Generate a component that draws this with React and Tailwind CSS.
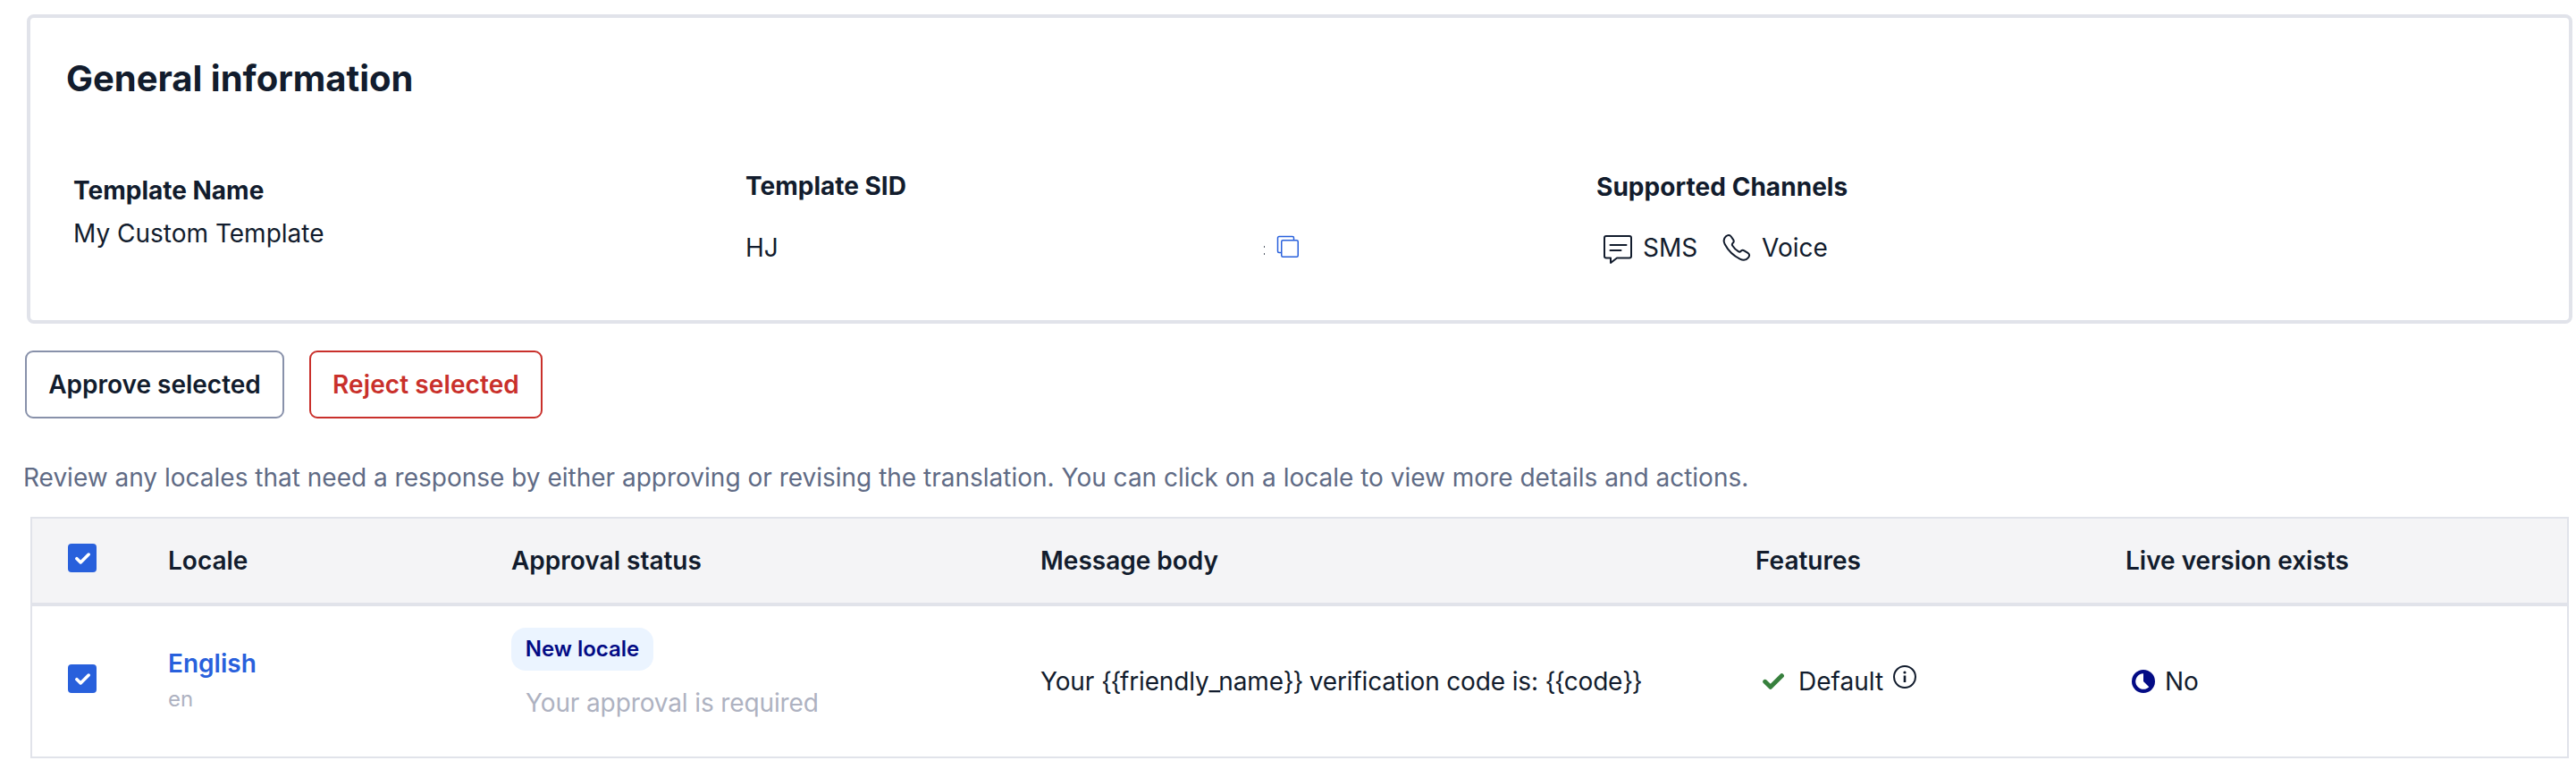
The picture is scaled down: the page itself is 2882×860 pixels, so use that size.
import React from "react";

function CopyIcon() {
  return (
    <svg className="block size-[26px]" viewBox="0 0 26 26" fill="none" stroke="#2860dc" strokeWidth="1.500">
      <path d="M5.500 19.500H3A1.500 1.500 0 0 1 1.500 18V3A1.500 1.500 0 0 1 3 1.500h15A1.500 1.500 0 0 1 19.500 3v2.500" />
      <rect x="5.750" y="5.750" width="18.500" height="18.500" rx="1.500" />
    </svg>
  );
}

function SmsIcon() {
  return (
    <svg className="block h-[34px] w-[34px]" viewBox="0 0 34 34" fill="none" stroke="#121c2d" strokeWidth="2" strokeLinecap="round" strokeLinejoin="round">
      <path d="M4 2h26a2 2 0 0 1 2 2v20.500a2 2 0 0 1-2 2H16L9 32v-5.500H4a2 2 0 0 1-2-2V4a2 2 0 0 1 2-2z" />
      <path d="M8.500 12h18M8.500 18h12" />
    </svg>
  );
}

function PhoneIcon() {
  return (
    <svg className="block size-[32px]" viewBox="0 0 32 32" fill="none" stroke="#121c2d" strokeWidth="2" strokeLinejoin="round">
      <path d="M4 3.300C6.300 1.300 8.300 1.600 9.700 3.500l2.500 3.600c1 1.500.6 2.700-.5 3.700-1 .9-1.100 1.900-.4 2.900 1.700 2.700 3.900 4.800 6.500 6.500 1.100.7 2 .6 2.900-.4 1.100-1.100 2.300-1.400 3.700-.5l4.100 2.600c1.900 1.300 2.200 3.100.5 5.200-2.300 2.900-5.800 3.300-9.400 1.500C12.600 25.200 6.300 18.900 2.800 12.300 1 8.900 1.300 5.700 4 3.300z" />
    </svg>
  );
}

function CheckIcon({ className }) {
  return (
    <svg className={className} viewBox="0 0 24 18" fill="none" stroke="currentColor" strokeWidth="5" strokeLinecap="round" strokeLinejoin="round">
      <path d="M2.700 9.300l6.100 6L21.400 2.700" />
    </svg>
  );
}

function InfoIcon() {
  return (
    <svg className="block size-[26px]" viewBox="0 0 26 26" fill="none" stroke="#121c2d" strokeWidth="2">
      <circle cx="13" cy="13" r="12" />
      <path d="M13 11.500v7.500" strokeWidth="2.600" />
      <circle cx="13" cy="8" r="1.600" fill="#121c2d" stroke="none" />
    </svg>
  );
}

function ProgressIcon() {
  return (
    <svg className="block size-[26px]" viewBox="0 0 26 26">
      <circle cx="13" cy="13" r="13" fill="#030b85" />
      <path d="M13 4.200a8.800 8.800 0 1 0 6.300 15L13 13z" fill="#fff" />
    </svg>
  );
}

function Checkbox() {
  return (
    <span className="flex size-8 items-center justify-center rounded-[4px] bg-[#2860dc]">
      <CheckIcon className="block h-[13px] w-[17px] text-white" />
    </span>
  );
}

function Variable({ children }) {
  return (
    <span>
      <span className="tracking-[-1.400px]">{"{{"}</span>
      {children}
      <span className="tracking-[-1.400px]">{"}}"}</span>
    </span>
  );
}

const grid = "grid grid-cols-[152px_384px_592px_800px_414px_1fr]";

export default function App() {
  return (
    <main className="h-[860px] w-[2882px] overflow-hidden bg-white pt-4 font-['Inter',sans-serif] text-[28px] leading-10 text-[#121c2d]">
      <section className="ml-[30px] h-[346px] w-[2848px] rounded-[8px] border-4 border-[#e1e3ea] pl-10 pt-[38px]">
        <h2 className="text-[40px] leading-[60px] font-bold">General information</h2>
        <div className="flex">
          <div className="ml-2 w-[752px] pt-[75px]">
            <h3 className="font-bold">Template Name</h3>
            <p className="mt-2">My Custom Template</p>
          </div>
          <div className="w-[952px] pt-[70px]">
            <h3 className="font-bold">Template SID</h3>
            <div className="mt-[29px] flex">
              <span className="w-[580px]">HJ</span>
              <span className="flex w-[14px] flex-col gap-[6px] pt-[18px]">
                <i className="block h-[2px] w-px bg-[#555c69]" />
                <i className="block h-[2px] w-px bg-[#555c69]" />
              </span>
              <span className="pt-[6px]"><CopyIcon /></span>
            </div>
          </div>
          <div className="pt-[71px]">
            <h3 className="font-bold tracking-[0.050px]">Supported Channels</h3>
            <div className="mt-7 flex">
              <span className="ml-[7px] w-[45px] pt-[5px]"><SmsIcon /></span>
              <span className="w-[89px]">SMS</span>
              <span className="w-[44px] pt-1"><PhoneIcon /></span>
              <span>Voice</span>
            </div>
          </div>
        </div>
      </section>

      <div className="mt-[30px] ml-7 flex gap-7">
        <button className="h-[76px] w-[290px] rounded-[9px] border-2 border-[#8891aa] font-semibold">Approve selected</button>
        <button className="h-[76px] w-[261px] rounded-[9px] border-2 border-[#c9302b] font-semibold tracking-[0.100px] text-[#c9302b]">Reject selected</button>
      </div>

      <p className="mt-[46px] ml-[26px] text-[#606b85]">
        Review any locales that need a response by either approving or revising the translation. You can click on a locale to view more details and actions.
      </p>

      <div className="mt-6 ml-[34px] h-[270px] w-[2840px] border-2 border-[#e1e3ea]">
        <div className={grid + " h-[98px] border-b-4 border-[#e1e3ea] bg-[#f4f4f6] font-semibold"}>
          <div className="pt-7 pl-10"><Checkbox /></div>
          <div className="pt-[27px]">Locale</div>
          <div className="pt-[27px]">Approval status</div>
          <div className="pt-[27px]">Message body</div>
          <div className="pt-[27px]">Features</div>
          <div className="pt-[27px]">Live version exists</div>
        </div>
        <div className={grid}>
          <div className="pt-[65px] pl-10"><Checkbox /></div>
          <div className="pt-[44px]">
            <a className="block font-semibold text-[#2860dc]">English</a>
            <span className="block text-[24px] leading-10 text-[#aeb2c1]">en</span>
          </div>
          <div className="pt-6">
            <span className="flex h-12 w-[159px] items-center justify-center rounded-[16px] bg-[#ebf4ff] text-[24px] font-semibold text-[#030b85]">New locale</span>
            <p className="mt-4 ml-4 tracking-[-0.120px] text-[#aeb2c1]">Your approval is required</p>
          </div>
          <div className="pt-16 tracking-[-0.150px]">
            Your <Variable>friendly<span className="tracking-[-2px]">_</span>name</Variable> verification code is: <Variable>code</Variable>
          </div>
          <div className="flex">
            <CheckIcon className="mt-[75px] ml-2 block h-[18px] w-6 text-[#37803d]" />
            <span className="ml-[16px] w-[106px] pt-16">Default</span>
            <span className="pt-[66px]"><InfoIcon /></span>
          </div>
          <div className="flex">
            <span className="ml-[7px] pt-[71px]"><ProgressIcon /></span>
            <span className="ml-[11px] pt-16">No</span>
          </div>
        </div>
      </div>
    </main>
  );
}
